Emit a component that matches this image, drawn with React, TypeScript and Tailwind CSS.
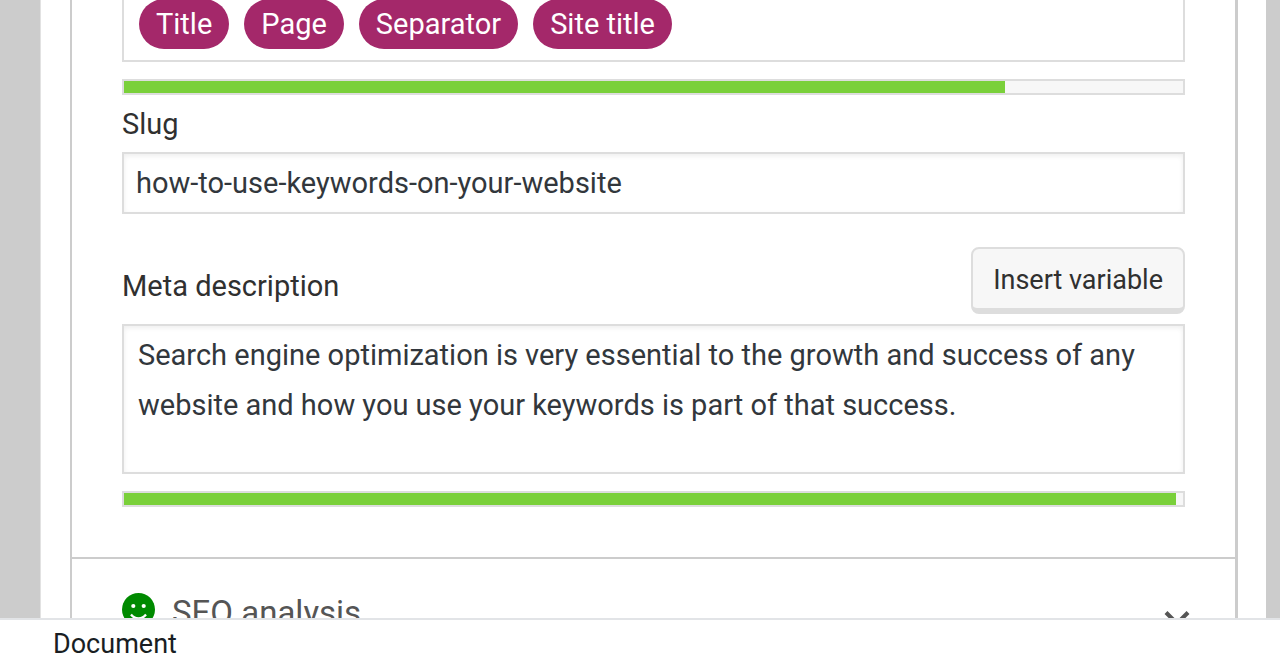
import { ChevronDown } from 'lucide-react'

const titleVariables = ['Title', 'Page', 'Separator', 'Site title']

const metaDescription =
  'Search engine optimization is very essential to the growth and success of any website and how you use your keywords is part of that success.'

function LengthBar({ label, value }: { label: string; value: number }) {
  return (
    <div
      role="progressbar"
      aria-label={label}
      aria-valuenow={value}
      className="h-4 border-2 border-[#ddd] bg-[#f7f7f7]"
    >
      <div className="h-full bg-[#7ad03a]" style={{ width: `${value}%` }} />
    </div>
  )
}

function SmileyIcon() {
  return (
    <svg viewBox="0 0 33 33" className="mt-1 h-[33px] w-[33px] shrink-0" aria-hidden="true">
      <circle cx="16.5" cy="16.5" r="16.5" fill="#008a00" />
      <circle cx="11.3" cy="13" r="2.1" fill="#fff" />
      <circle cx="21.7" cy="13" r="2.1" fill="#fff" />
      <path
        d="M9 21.500c2 2.800 4.600 3.900 7.500 3.900s5.500-1.100 7.500-3.900"
        fill="none"
        stroke="#fff"
        strokeWidth="2.200"
      />
    </svg>
  )
}

export default function App() {
  return (
    <div className="flex h-screen flex-col bg-white font-[Roboto,sans-serif] text-[29px] text-[#303030]">
      <main className="min-h-0 flex-1 overflow-hidden bg-[#ccc] pl-10 pr-3.5">
        <div className="border-l border-[#e2e2e2] bg-white pl-[29px] pr-7">
          <div className="border-l-2 border-r-3 border-[#ccc]">
            <section className="px-[50px] pb-[50px]">
              <div
                role="group"
                aria-label="SEO title"
                className="-mt-3.5 flex gap-[15px] border-2 border-[#ddd] px-[15px] py-[11px]"
              >
                {titleVariables.map((name) => (
                  <span
                    key={name}
                    className="flex h-[50px] items-center rounded-full bg-[#a4286a] px-[17px] pt-0.5 text-white"
                  >
                    {name}
                  </span>
                ))}
              </div>
              <div className="mt-[17px]">
                <LengthBar label="SEO title length" value={83.2} />
              </div>

              <label htmlFor="slug" className="mt-[9px] mb-2 block leading-10">
                Slug
              </label>
              <input
                id="slug"
                defaultValue="how-to-use-keywords-on-your-website"
                className="block h-[62px] w-full border-2 border-[#ddd] px-3 text-[#32373c] shadow-[inset_0_2px_5px_rgba(0,0,0,0.07)]"
              />

              <div className="mt-[33px] flex items-end justify-between">
                <label htmlFor="meta" className="pb-2 leading-10">
                  Meta description
                </label>
                <button
                  type="button"
                  className="h-[67px] rounded-lg border-2 border-b-6 border-[#ddd] bg-[#f7f7f7] px-5 pt-1 text-[27px]"
                >
                  Insert variable
                </button>
              </div>
              <textarea
                id="meta"
                defaultValue={metaDescription}
                className="mt-2.5 block h-[150px] w-full resize-none border-2 border-[#ddd] px-3.5 py-1 leading-[50px] text-[#32373c] shadow-[inset_0_2px_5px_rgba(0,0,0,0.07)]"
              />
              <div className="mt-[17px]">
                <LengthBar label="Meta description length" value={99.3} />
              </div>
            </section>

            <button
              type="button"
              className="flex w-full items-start border-t-2 border-[#ccc] pt-[30px] pr-9 pb-8 pl-[50px] text-[33px] leading-12 text-[#555]"
            >
              <SmileyIcon />
              <span className="ml-[17px]">SEO analysis</span>
              <ChevronDown
                className="mt-[7px] ml-auto h-11 w-11"
                strokeWidth={2.25}
                strokeLinecap="butt"
                strokeLinejoin="miter"
              />
            </button>
          </div>
        </div>
      </main>

      <footer className="h-[51px] border-t-2 border-[#e2e4e7] px-[53px] text-[27px] leading-12 text-[#191e23]">
        Document
      </footer>
    </div>
  )
}
